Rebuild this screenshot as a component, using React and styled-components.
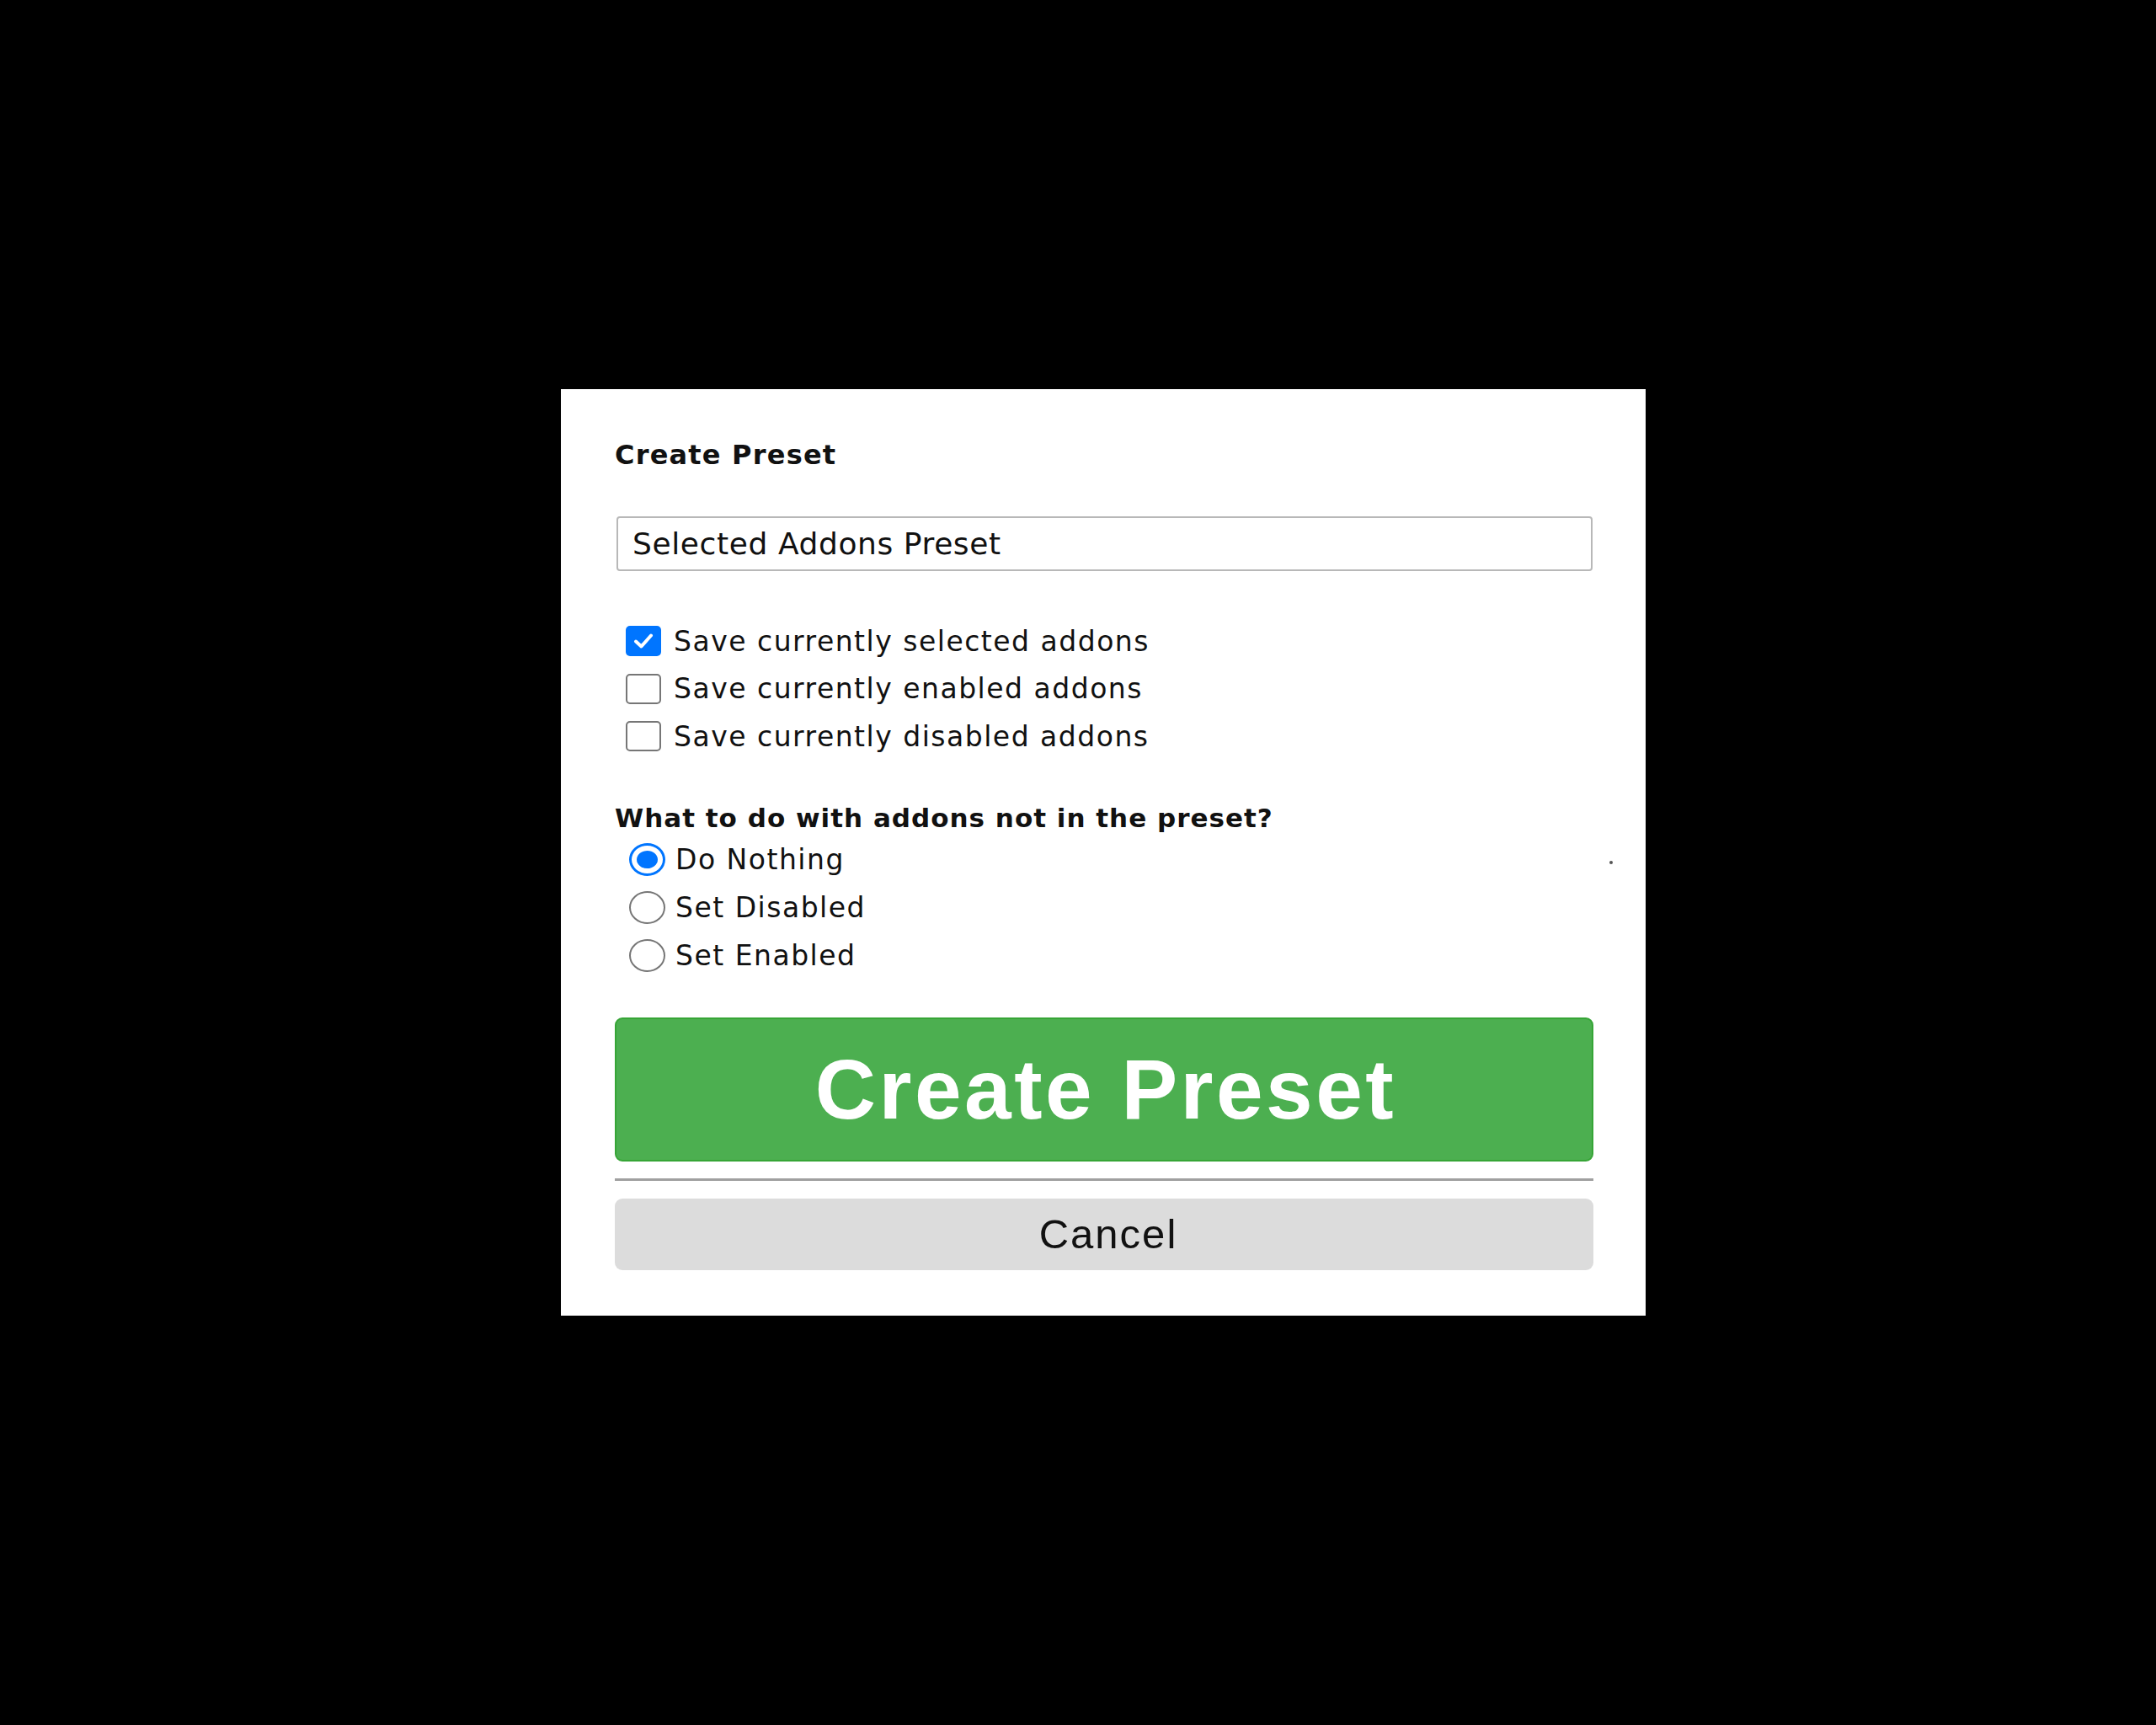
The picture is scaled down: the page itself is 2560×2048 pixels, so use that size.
import styled, { createGlobalStyle } from "styled-components";

const GlobalStyle = createGlobalStyle`
    body {
        margin: 0;
        background: #000;
    }
`;

const Page = styled.div`
    min-height: 2048px;
    background: #000;
    padding: 462px 0 0 666px;
    box-sizing: border-box;
`;

const Dialog = styled.div`
    position: relative;
    width: 1288px;
    height: 1100px;
    background: #fff;
    padding: 58px 62px 0 64px;
    box-sizing: border-box;
    display: flex;
    flex-direction: column;
    font-family: "DejaVu Sans", Verdana, sans-serif;
    color: #111;
`;

const Title = styled.h2`
    margin: 0;
    font-size: 32px;
    line-height: 40px;
    font-weight: bold;
    letter-spacing: 1.2px;
`;

const NameInput = styled.input`
    margin: 53px 0 0 2px;
    width: calc(100% - 3px);
    height: 65px;
    box-sizing: border-box;
    border: 2px solid #b8b8b8;
    border-radius: 4px;
    padding: 0 17px;
    font-family: "DejaVu Sans", Verdana, sans-serif;
    font-size: 36px;
    letter-spacing: 0.6px;
    color: #111;
    outline: none;
`;

const OptionList = styled.div`
    display: flex;
    flex-direction: column;
    margin-top: ${p => p.$top}px;
`;

const Row = styled.label`
    display: flex;
    align-items: center;
    height: ${p => p.$h}px;
    padding-left: ${p => p.$indent}px;
    gap: ${p => p.$gap}px;
    font-size: 33px;
    letter-spacing: 1.5px;
    white-space: nowrap;
`;

const Box = styled.span`
    width: 42px;
    height: 36px;
    box-sizing: border-box;
    border-radius: 5px;
    border: ${p => (p.$on ? "none" : "2px solid #767676")};
    background: ${p => (p.$on ? "#0075ff" : "#fff")};
    display: flex;
    align-items: center;
    justify-content: center;
    flex-shrink: 0;
`;

const Radio = styled.span`
    position: relative;
    width: 43px;
    height: 39px;
    box-sizing: border-box;
    border-radius: 50%;
    border: ${p => (p.$on ? "3px solid #0075ff" : "2px solid #767676")};
    flex-shrink: 0;

    &::after {
        content: "";
        display: ${p => (p.$on ? "block" : "none")};
        position: absolute;
        left: 6px;
        top: 6px;
        right: 6px;
        bottom: 6px;
        border-radius: 50%;
        background: #0075ff;
    }
`;

const Question = styled.h3`
    margin: 48px 0 0;
    font-size: 31px;
    line-height: 40px;
    font-weight: bold;
    letter-spacing: 1px;
`;

const CreateButton = styled.button`
    margin-top: 45px;
    height: 171px;
    background: #4caf50;
    border: 2px solid #36a536;
    border-radius: 9px;
    color: #fff;
    font-family: "Liberation Sans", Arial, sans-serif;
    font-weight: bold;
    font-size: 100px;
    letter-spacing: 3.5px;
    padding: 0 0 0 4px;
    cursor: pointer;
`;

const Divider = styled.hr`
    margin: 20px 0 0;
    border: none;
    height: 3px;
    background: #a0a0a0;
`;

const CancelButton = styled.button`
    margin-top: 21px;
    height: 85px;
    background: #dcdcdc;
    border: none;
    border-radius: 9px;
    color: #111;
    font-family: "Liberation Sans", Arial, sans-serif;
    font-size: 49px;
    letter-spacing: 2px;
    padding: 0 0 0 10px;
    cursor: pointer;
`;

const Speck = styled.span`
    position: absolute;
    left: 1245px;
    top: 560px;
    width: 4px;
    height: 4px;
    border-radius: 50%;
    background: #555;
`;

const saveOptions = [
    { label: "Save currently selected addons", checked: true },
    { label: "Save currently enabled addons", checked: false },
    { label: "Save currently disabled addons", checked: false },
];

const otherOptions = [
    { label: "Do Nothing", checked: true },
    { label: "Set Disabled", checked: false },
    { label: "Set Enabled", checked: false },
];

function Check() {
    return (
        <svg width="26" height="22" viewBox="0 0 26 22">
            <path d="M4 11.5 L10.5 17.5 L22 4.5" fill="none" stroke="#fff" strokeWidth="4" strokeLinecap="round" strokeLinejoin="round" />
        </svg>
    );
}

export default function App() {
    return (
        <Page>
            <GlobalStyle />
            <Dialog>
                <Title>Create Preset</Title>
                <NameInput defaultValue="Selected Addons Preset" />

                <OptionList $top={55}>
                    {saveOptions.map((opt) => (
                        <Row key={opt.label} $h={56.5} $indent={13} $gap={15}>
                            <Box $on={opt.checked}>{opt.checked ? <Check /> : null}</Box>
                            {opt.label}
                        </Row>
                    ))}
                </OptionList>

                <Question>What to do with addons not in the preset?</Question>
                <OptionList $top={1}>
                    {otherOptions.map((opt) => (
                        <Row key={opt.label} $h={57} $indent={17} $gap={12}>
                            <Radio $on={opt.checked} />
                            {opt.label}
                        </Row>
                    ))}
                </OptionList>

                <CreateButton>Create Preset</CreateButton>
                <Divider />
                <CancelButton>Cancel</CancelButton>

                <Speck />
            </Dialog>
        </Page>
    );
}
